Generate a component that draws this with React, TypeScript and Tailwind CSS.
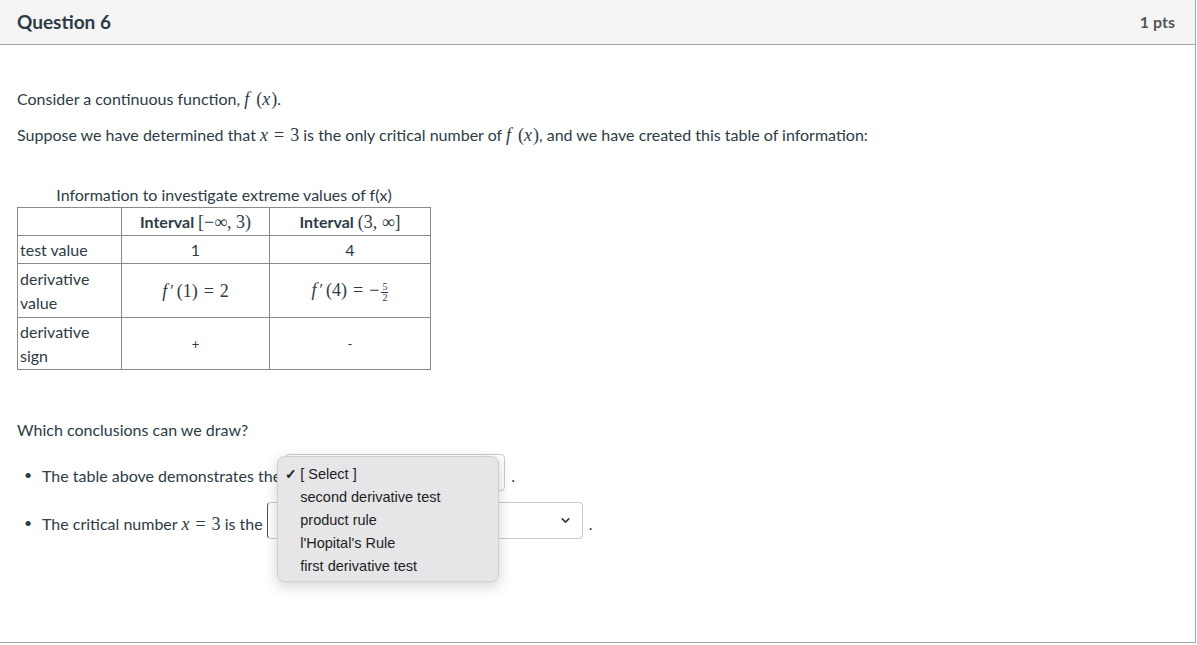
import React from 'react';
import { ChevronDown } from 'lucide-react';

const serif = { fontFamily: '"Liberation Serif", "DejaVu Serif", serif' };

function M({ children }: { children: React.ReactNode }) {
  return (
    <span className="text-[18px] font-normal whitespace-nowrap" style={serif}>
      {children}
    </span>
  );
}

function I({ children }: { children: React.ReactNode }) {
  return <span className="italic">{children}</span>;
}

function Eq() {
  return <span className="mx-[6px]">=</span>;
}

function Fx() {
  return (
    <M>
      <I>f</I>
      <span className="ml-[7px]">(</span>
      <I>x</I>
      <span className="ml-[1px]">)</span>
    </M>
  );
}

function Prime({ arg }: { arg: string }) {
  return (
    <>
      <I>f</I>
      <span className="ml-[3px] text-[16px] align-top">′</span>
      <span className="ml-[3px]">({arg})</span>
    </>
  );
}

function SelectBox({ width }: { width: string }) {
  return (
    <span
      className={`inline-flex items-center justify-between h-[37px] ${width} border border-[#c7cdd1] rounded-[4px] bg-white px-[10px] align-middle`}
    >
      <span className="text-[14px] text-[#2d3b45]">[ Select ]</span>
      <ChevronDown size={13} strokeWidth={3} className="text-[#2d3b45]" />
    </span>
  );
}

const options = ['second derivative test', 'product rule', "l'Hopital's Rule", 'first derivative test'];

export default function App() {
  return (
    <div
      className="w-[1196px] h-[643px] border-r border-b border-[#a5a5a5] bg-white text-[#2d3b45]"
      style={{ fontFamily: 'Lato, "Liberation Sans", sans-serif' }}
    >
      {/* Header */}
      <div className="h-[45px] bg-[#f5f5f5] border-b border-[#a5a5a5] flex items-center justify-between px-[17px]">
        <h2 className="text-[19px] font-bold text-[#2d3b45]">Question 6</h2>
        <span className="text-[16px] font-bold text-[#555] pr-[3px]">1 pts</span>
      </div>

      {/* Body */}
      <div className="px-[17px] pt-[42px] text-[16px] leading-[24px]">
        <p>
          Consider a continuous function, <Fx />.
        </p>
        <p className="mt-[12px]">
          Suppose we have determined that{' '}
          <M>
            <I>x</I>
            <Eq />3
          </M>{' '}
          is the only critical number of <Fx />, and we have created this table of information:
        </p>

        {/* Table */}
        <div className="mt-[36px] w-[414px]">
          <div className="text-center leading-[24px]">Information to investigate extreme values of f(x)</div>
          <table className="w-full border-collapse border border-[#8a8a8a]">
            <tbody>
              <tr className="h-[28px]">
                <td className="w-[104px] border border-[#8a8a8a]"></td>
                <td className="w-[148px] border border-[#8a8a8a] text-center font-bold">
                  Interval <M>[−∞, 3)</M>
                </td>
                <td className="border border-[#8a8a8a] text-center font-bold">
                  Interval <M>(3, ∞]</M>
                </td>
              </tr>
              <tr className="h-[28px]">
                <td className="border border-[#8a8a8a] px-[2px]">test value</td>
                <td className="border border-[#8a8a8a] text-center">1</td>
                <td className="border border-[#8a8a8a] text-center">4</td>
              </tr>
              <tr className="h-[54px]">
                <td className="border border-[#8a8a8a] px-[2px] leading-[24px]">
                  derivative
                  <br />
                  value
                </td>
                <td className="border border-[#8a8a8a] text-center">
                  <M>
                    <Prime arg="1" />
                    <Eq />2
                  </M>
                </td>
                <td className="border border-[#8a8a8a] text-center">
                  <M>
                    <Prime arg="4" />
                    <Eq />−
                    <span className="inline-flex flex-col items-center align-middle text-[10px] leading-[10px] ml-[2px]">
                      <span>5</span>
                      <span className="border-t border-[#2d3b45] px-[1px]">2</span>
                    </span>
                  </M>
                </td>
              </tr>
              <tr className="h-[52px]">
                <td className="border border-[#8a8a8a] px-[2px] leading-[24px]">
                  derivative
                  <br />
                  sign
                </td>
                <td className="border border-[#8a8a8a] text-center text-[13px]">+</td>
                <td className="border border-[#8a8a8a] text-center text-[13px]">-</td>
              </tr>
            </tbody>
          </table>
        </div>

        <p className="mt-[48px]">Which conclusions can we draw?</p>

        <ul className="mt-[12px] flex flex-col gap-[11px]">
          <li className="flex items-center h-[37px]">
            <span className="w-[25px] pl-[7px] text-[14px] pt-[4px]">•</span>
            <span className="pt-[7px]">The table above demonstrates the&nbsp;</span>
            <span className="relative">
              <SelectBox width="w-[220px]" />
              {/* open native dropdown */}
              <div
                className="absolute left-[-8px] top-[2px] w-[222px] h-[126px] bg-[#e6e5e7] border border-[#cfcfcf] rounded-[7px] shadow-[0_4px_14px_rgba(0,0,0,0.18)] pt-[6px] text-[14.5px] leading-[23px] text-[#1e1e1e] z-10"
                style={{ fontFamily: '"Liberation Sans", Arial, sans-serif' }}
              >
                <div className="flex">
                  <span className="w-[22px] pl-[7px] text-[14px] font-bold">✓</span>
                  <span>[ Select ]</span>
                </div>
                {options.map((o) => (
                  <div key={o} className="pl-[22px]">
                    {o}
                  </div>
                ))}
              </div>
            </span>
            <span className="pl-[6px] pt-[7px]">.</span>
          </li>
          <li className="flex items-center h-[37px]">
            <span className="w-[25px] pl-[7px] text-[14px] pt-[4px]">•</span>
            <span className="pt-[7px]">
              The critical number{' '}
              <M>
                <I>x</I>
                <Eq />3
              </M>{' '}
              is the&nbsp;
            </span>
            <span className="inline-flex items-center justify-end h-[37px] w-[316px] border border-[#c7cdd1] border-l-[#555] rounded-[4px] bg-white px-[10px]">
              <ChevronDown size={13} strokeWidth={3} className="text-[#2d3b45]" />
            </span>
            <span className="pl-[6px] pt-[7px]">.</span>
          </li>
        </ul>
      </div>
    </div>
  );
}
